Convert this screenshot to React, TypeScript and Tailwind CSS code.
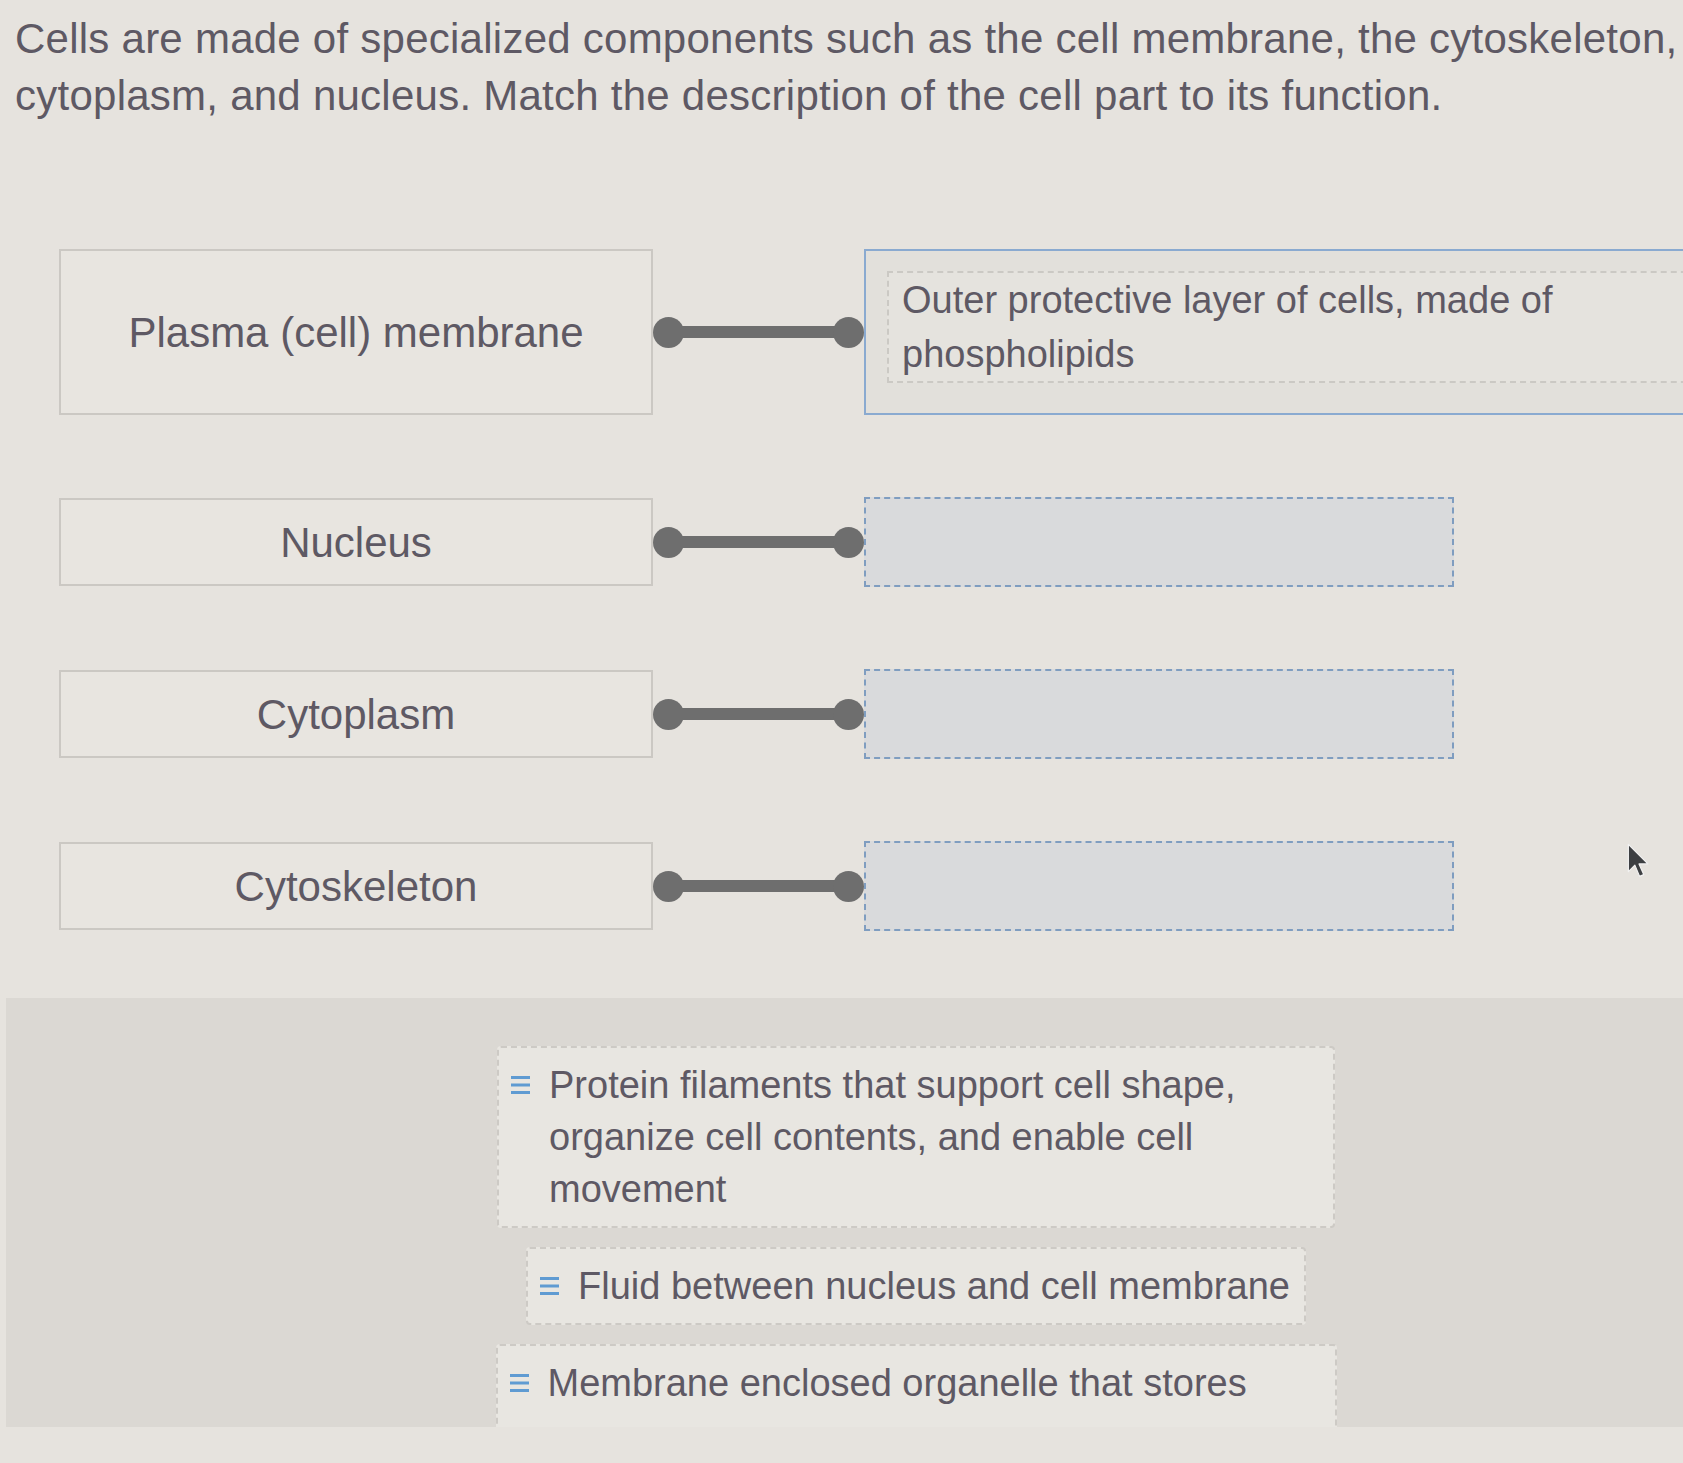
const LABELS = ["Plasma (cell) membrane", "Nucleus", "Cytoplasm", "Cytoskeleton"];

function Connector() {
	return (
		<div className="flex w-[211px] shrink-0 items-center">
			<span className="h-[31px] w-[31px] shrink-0 rounded-full bg-[#6e6e6e]" />
			<span className="-mx-[4px] h-[12px] flex-1 bg-[#6e6e6e]" />
			<span className="h-[31px] w-[31px] shrink-0 rounded-full bg-[#6e6e6e]" />
		</div>
	);
}

function GripIcon() {
	return (
		<svg width="19" height="20" viewBox="0 0 19 20" className="mt-[16px] shrink-0">
			<rect x="0" y="1" width="19" height="3" fill="#5f9bd2" />
			<rect x="0" y="8.5" width="19" height="3" fill="#5f9bd2" />
			<rect x="0" y="16" width="19" height="3" fill="#5f9bd2" />
		</svg>
	);
}

function Cursor() {
	return (
		<svg
			width="26"
			height="38"
			viewBox="0 0 22 32"
			className="absolute left-[1626px] top-[842px]"
		>
			<path
				d="M2 2 L2 25 L7.5 19.5 L11.5 29 L15 27.5 L11 18.5 L18.5 18.5 Z"
				fill="#3d3f42"
				stroke="#f2f2f2"
				strokeWidth="1"
				strokeLinejoin="round"
			/>
		</svg>
	);
}

export default function App() {
	return (
		<div className="relative h-[1463px] w-[1683px] overflow-hidden bg-[#e6e3de] font-['Liberation_Sans',Arial,sans-serif] text-[#5e5964]">
			<p className="w-[1683px] pl-[15px] pt-[10px] text-[42px] leading-[57px] tracking-[0.25px]">
				Cells are made of specialized components such as the cell membrane, the cytoskeleton,
				cytoplasm, and nucleus. Match the description of the cell part to its function.
			</p>

			<div className="mt-[125px] flex flex-col gap-[82px]">
				{LABELS.map((label, i) => (
					<div key={label} className="flex items-center pl-[59px]">
						<div
							className={`flex w-[594px] shrink-0 items-center justify-center border-2 border-[#cbc8c3] bg-[#e8e5e0] text-[42px] ${
								i === 0 ? "h-[166px]" : "h-[88px]"
							}`}
						>
							{label}
						</div>
						<Connector />
						{i === 0 ? (
							<div className="h-[166px] w-[900px] shrink-0 border-2 border-[#8aaad0] bg-[#e2e0db] pl-[21px] pt-[20px]">
								<div className="w-[840px] border-2 border-dashed border-[#cbc9c4] bg-[#e5e3de] pl-[13px] text-[38px] leading-[54px]">
									Outer protective layer of cells, made of phospholipids
								</div>
							</div>
						) : (
							<div className="h-[90px] w-[590px] shrink-0 border-2 border-dashed border-[#7f9dc0] bg-[#d9dadc]" />
						)}
					</div>
				))}
			</div>

			<div className="ml-[6px] mt-[67px] flex h-[429px] flex-col items-center gap-[19px] overflow-hidden bg-[#dbd8d3] pl-[143px] pt-[48px]">
				<div className="flex w-[838px] items-start gap-[19px] rounded-[4px] border-2 border-dashed border-[#cdcac5] bg-[#e8e6e1] py-[11px] pl-[12px] pr-[14px] text-[38px] leading-[52px]">
					<GripIcon />
					<span>
						Protein filaments that support cell shape, organize cell contents, and enable cell
						movement
					</span>
				</div>
				<div className="flex w-fit items-start gap-[19px] rounded-[4px] border-2 border-dashed border-[#cdcac5] bg-[#e8e6e1] py-[11px] pl-[12px] pr-[14px] text-[38px] leading-[52px]">
					<GripIcon />
					<span>Fluid between nucleus and cell membrane</span>
				</div>
				<div className="flex h-[120px] w-[841px] shrink-0 items-start gap-[19px] rounded-[4px] border-2 border-dashed border-[#cdcac5] bg-[#e8e6e1] py-[11px] pl-[12px] pr-[14px] text-[38px] leading-[52px]">
					<GripIcon />
					<span>Membrane enclosed organelle that stores</span>
				</div>
			</div>

			<Cursor />
		</div>
	);
}
